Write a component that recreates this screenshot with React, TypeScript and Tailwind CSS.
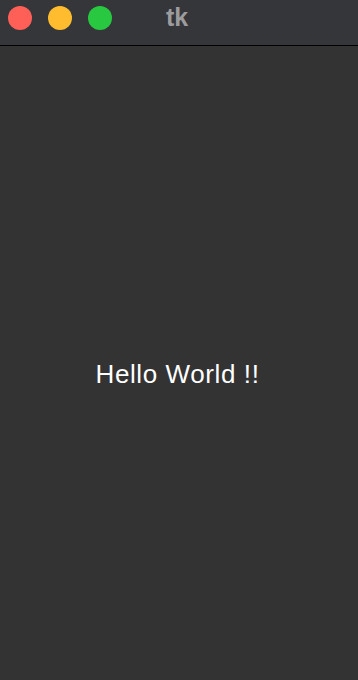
export default function App() {
  return (
    <div className="flex h-[680px] w-[358px] flex-col bg-[#333333] font-['Liberation_Sans',Arial,sans-serif]">
      <div className="relative flex h-[46px] shrink-0 items-start border-b border-black bg-[#35363a]">
        <div className="flex gap-4 pl-2 pt-[6px]">
          <span className="h-6 w-6 rounded-full bg-[#fe5f57]" />
          <span className="h-6 w-6 rounded-full bg-[#febc2e]" />
          <span className="h-6 w-6 rounded-full bg-[#28c840]" />
        </div>
        <div className="absolute left-0 right-[4px] top-[3px] text-center text-[25px] font-bold leading-[28px] text-[#9c9c9e]">
          tk
        </div>
      </div>
      <div className="flex flex-1 items-center justify-center pr-[3px] pt-[22px]">
        <span className="text-[26px] tracking-[0.6px] text-white">Hello World !!</span>
      </div>
    </div>
  )
}
